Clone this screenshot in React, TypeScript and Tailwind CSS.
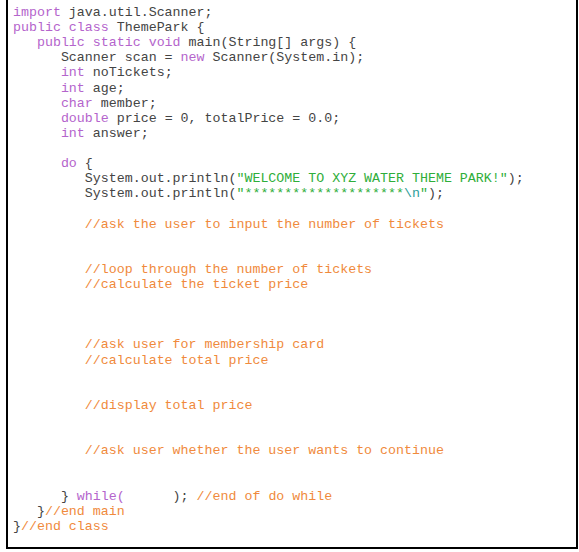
type Tok = [string, string?];

const K = "text-[#b464cc]";
const C = "text-[#f08a3c]";
const S = "text-[#2fae3a]";
const E = "text-[#2a9d9a]";

const lines: Tok[][] = [
  [["import", K], [" java.util.Scanner;"]],
  [["public class", K], [" ThemePark {"]],
  [["   "], ["public static void", K], [" main(String[] args) {"]],
  [["      Scanner scan = "], ["new", K], [" Scanner(System.in);"]],
  [["      "], ["int", K], [" noTickets;"]],
  [["      "], ["int", K], [" age;"]],
  [["      "], ["char", K], [" member;"]],
  [["      "], ["double", K], [" price = 0, totalPrice = 0.0;"]],
  [["      "], ["int", K], [" answer;"]],
  [],
  [["      "], ["do", K], [" {"]],
  [["         System.out.println("], ['"WELCOME TO XYZ WATER THEME PARK!"', S], [");"]],
  [["         System.out.println("], ['"********************', S], ["\\n", E], ['"', S], [");"]],
  [],
  [["         "], ["//ask the user to input the number of tickets", C]],
  [],
  [],
  [["         "], ["//loop through the number of tickets", C]],
  [["         "], ["//calculate the ticket price", C]],
  [],
  [],
  [],
  [["         "], ["//ask user for membership card", C]],
  [["         "], ["//calculate total price", C]],
  [],
  [],
  [["         "], ["//display total price", C]],
  [],
  [],
  [["         "], ["//ask user whether the user wants to continue", C]],
  [],
  [],
  [["      } "], ["while(", K], ["      ); "], ["//end of do while", C]],
  [["   }"], ["//end main", C]],
  [["}"], ["//end class", C]],
];

export default function App() {
  return (
    <div className="w-[579px] h-[552px] bg-white">
      <div className="ml-[6px] w-[572px] h-[549px] border-l-2 border-r-2 border-b-2 border-black pl-[5px] pt-[5px]">
        <pre
          className="text-[13.3px] leading-[15.12px] text-[#444444] whitespace-pre"
          style={{ fontFamily: '"Liberation Mono", "Courier New", monospace' }}
        >
          {lines.map((toks, i) => (
            <div key={i} className="h-[15.12px]">
              {toks.map(([t, cls], j) => (
                <span key={j} className={cls}>
                  {t}
                </span>
              ))}
            </div>
          ))}
        </pre>
      </div>
    </div>
  );
}
